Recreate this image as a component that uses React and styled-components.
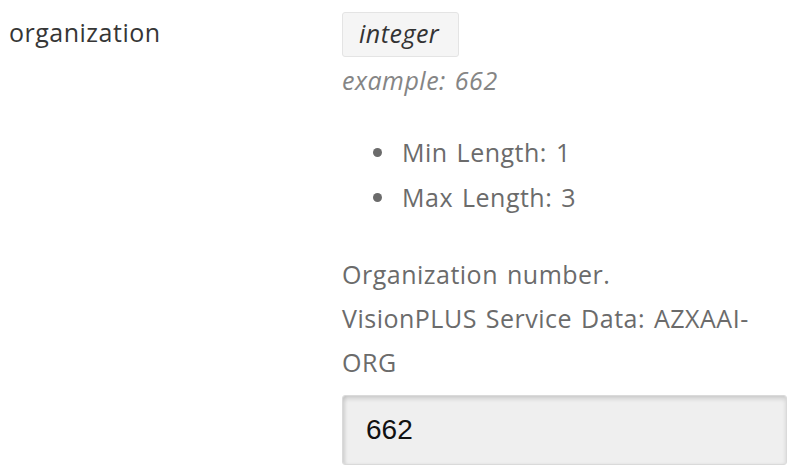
import React from "react";
import styled, { createGlobalStyle } from "styled-components";

const Global = createGlobalStyle`
  html, body { margin: 0; padding: 0; background: #ffffff; }
  body {
    font-family: "Open Sans", "Noto Sans", sans-serif;
    font-size: 25px;
    letter-spacing: 0.5px;
    word-spacing: 2px;
  }
`;

const Row = styled.div`
  display: flex;
  align-items: flex-start;
  padding-left: 9px;
`;

const NameCell = styled.div`
  width: 333px;
  flex: none;
  padding-top: 16px;
  line-height: 33px;
  color: #363636;
`;

const ValueCell = styled.div`
  width: 445px;
  flex: none;
  display: flex;
  flex-direction: column;
  align-items: flex-start;
  padding-top: 12px;
`;

const TypeBadge = styled.div`
  box-sizing: border-box;
  height: 45px;
  padding: 0 19px 0 16px;
  border: 1px solid #e4e4e4;
  border-radius: 3px;
  background: #f5f5f5;
  font-style: italic;
  line-height: 41px;
  color: #333333;
`;

const Example = styled.div`
  margin-top: 1px;
  font-style: italic;
  line-height: 44px;
  color: #858585;
`;

const Constraints = styled.ul`
  margin: 28px 0 0;
  padding-left: 56px;
  line-height: 45px;
  color: #6b6b6b;
  list-style: disc;
`;

const Constraint = styled.li`
  padding-left: 4px;
`;

const Description = styled.div`
  align-self: stretch;
  margin-top: 32px;
  color: #6b6b6b;
  line-height: 44px;
`;

const Para = styled.p`
  margin: 0;
`;

const ValueInput = styled.input`
  display: block;
  box-sizing: border-box;
  margin-top: 11px;
  width: 445px;
  height: 70px;
  padding: 0 23px;
  border: 1px solid #dadada;
  border-radius: 3px;
  background: #efefef;
  box-shadow: inset 0 3px 4px rgba(0, 0, 0, 0.13), inset 3px 0 3px rgba(0, 0, 0, 0.06);
  font-family: "Liberation Sans", Arial, sans-serif;
  font-size: 28px;
  letter-spacing: 0;
  color: #111111;
  outline: none;
`;

export default function App() {
  return (
    <>
      <Global />
      <Row>
        <NameCell>organization</NameCell>
        <ValueCell>
          <TypeBadge>integer</TypeBadge>
          <Example>example: 662</Example>
          <Constraints>
            <Constraint>Min Length: 1</Constraint>
            <Constraint>Max Length: 3</Constraint>
          </Constraints>
          <Description>
            <Para>Organization number.</Para>
            <Para>VisionPLUS Service Data: AZXAAI-ORG</Para>
          </Description>
          <ValueInput defaultValue="662" />
        </ValueCell>
      </Row>
    </>
  );
}
